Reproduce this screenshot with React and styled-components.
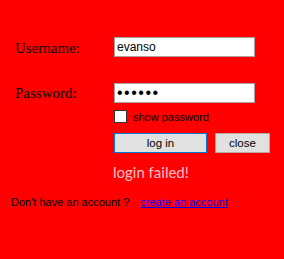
import React from 'react';
import styled, { createGlobalStyle } from 'styled-components';

const GlobalStyle = createGlobalStyle`
  html, body {
    margin: 0;
    padding: 0;
    background: #ff0000;
  }
  body {
    font-family: "Liberation Sans", Arial, sans-serif;
  }
`;

const StyledPage = styled.div`
  width: 284px;
  height: 259px;
  background: #ff0000;
  padding-top: 37px;
  box-sizing: border-box;
  overflow: hidden;
`;

const StyledFieldRow = styled.div`
  display: grid;
  grid-template-columns: 99px 141px;
  align-items: center;
  height: 20px;
  padding-left: 15px;
  margin-top: ${props => props.$gap || 0}px;
`;

const StyledLabel = styled.label`
  font-family: "Liberation Serif", "Times New Roman", serif;
  font-size: 15px;
  color: #000;
  padding-top: ${props => props.$shift || 0}px;
`;

const StyledInput = styled.input`
  box-sizing: border-box;
  width: 141px;
  height: 20px;
  margin: 0;
  padding: 0 2px;
  border: 1px solid #a3a3a3;
  background: #fff;
  font-family: "Liberation Sans", Arial, sans-serif;
  font-size: ${props => (props.type === 'password' ? '16px' : '12px')};
  letter-spacing: ${props => (props.type === 'password' ? '1.5px' : '0')};
  color: #000;
  outline: none;
`;

const StyledIndented = styled.div`
  display: flex;
  align-items: center;
  padding-left: 114px;
  margin-top: ${props => props.$gap || 0}px;
`;

const StyledCheckBox = styled.span`
  box-sizing: border-box;
  width: 13px;
  height: 13px;
  border: 1px solid #333;
  background: #fff;
`;

const StyledCheckText = styled.span`
  margin-left: 6px;
  font-size: 11px;
  color: #000;
`;

const StyledButton = styled.button`
  box-sizing: border-box;
  width: ${props => props.$width}px;
  height: 20px;
  margin: 0 8px 0 0;
  padding: 0;
  border: 1px solid ${props => (props.$focused ? '#0078d7' : '#adadad')};
  background: #e1e1e1;
  font-family: "Liberation Sans", Arial, sans-serif;
  font-size: 11.5px;
  color: #000;
`;

const StyledError = styled.div`
  margin-top: 10px;
  padding-left: 113px;
  font-family: Lato, "DejaVu Sans", sans-serif;
  font-size: 15px;
  line-height: 18px;
  color: #ffc0cb;
`;

const StyledFooter = styled.div`
  margin-top: 15px;
  padding-left: 11px;
  font-size: 11px;
  color: #000;
`;

const StyledLink = styled.a`
  margin-left: 11px;
  color: #0000ff;
  text-decoration: underline;
`;

const App = () => (
  <StyledPage>
    <GlobalStyle />
    <StyledFieldRow>
      <StyledLabel $shift={2}>Username:</StyledLabel>
      <StyledInput type="text" defaultValue="evanso" />
    </StyledFieldRow>
    <StyledFieldRow $gap={26}>
      <StyledLabel>Password:</StyledLabel>
      <StyledInput type="password" defaultValue="abcdef" />
    </StyledFieldRow>
    <StyledIndented $gap={7}>
      <StyledCheckBox />
      <StyledCheckText>show password</StyledCheckText>
    </StyledIndented>
    <StyledIndented $gap={10}>
      <StyledButton $width={93} $focused>log in</StyledButton>
      <StyledButton $width={55}>close</StyledButton>
    </StyledIndented>
    <StyledError>login failed!</StyledError>
    <StyledFooter>
      Don't have an account ?
      <StyledLink href="#">create an account</StyledLink>
    </StyledFooter>
  </StyledPage>
);

export default App;
